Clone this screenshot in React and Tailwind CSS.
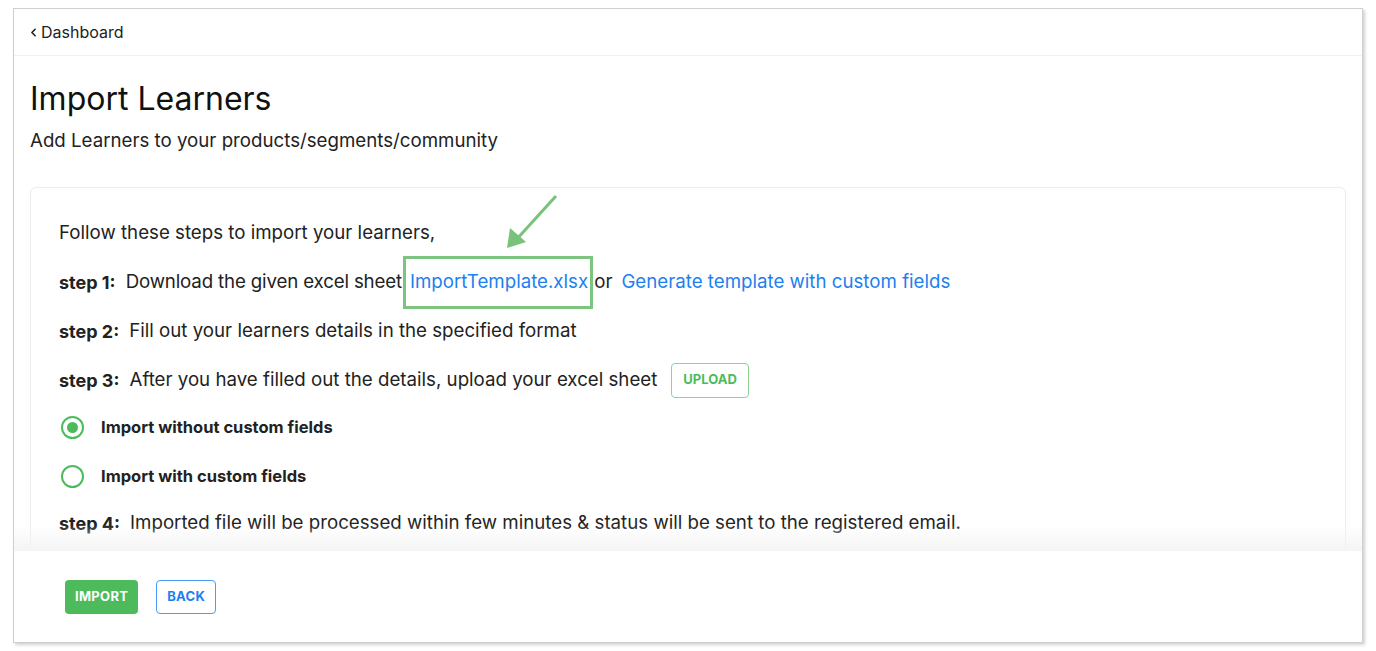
import { ChevronLeft } from "lucide-react";

const FONT = { fontFamily: "Inter, 'Noto Sans', sans-serif" };

function Step({ n, children, className = "h-[49px]" }) {
  return (
    <div className={`flex items-center text-[18.7px] text-[#222] ${className}`}>
      <span className="font-bold text-[18px] mr-[10px]">step {n}:</span>
      {children}
    </div>
  );
}

function Radio({ checked, label, className }) {
  return (
    <label className={`flex items-center ${className}`}>
      <span className="w-[23px] h-[23px] rounded-full border-2 border-[#4dbb5c] grid place-items-center ml-[2px] mr-[17px]">
        {checked && <span className="w-[11px] h-[11px] rounded-full bg-[#4dbb5c]" />}
      </span>
      <span className="text-[16.5px] font-bold text-[#222]">{label}</span>
    </label>
  );
}

export default function App() {
  return (
    <div className="min-h-screen bg-white pt-[8px] pl-[13px]" style={FONT}>
      <div className="w-[1350px] h-[635px] border border-[#cfcfcf] shadow-[2px_2px_3px_rgba(0,0,0,0.18)] flex flex-col bg-white">
        {/* top bar */}
        <div className="h-[47px] shrink-0 flex items-center pl-[13px] border-b border-[#eef0f6]">
          <ChevronLeft size={13} strokeWidth={3} className="text-[#222]" />
          <span className="ml-[1px] text-[16px] text-[#222]">Dashboard</span>
        </div>

        {/* scroll body */}
        <div className="relative h-[495px] shrink-0 overflow-hidden px-[16px]">
          <h1 className="pt-[23px] text-[32px] leading-[40px] text-[#111]">Import Learners</h1>
          <p className="mt-[8px] text-[18.7px] leading-[28px] text-[#222]">Add Learners to your products/segments/community</p>

          <div className="mt-[32px] border border-[#ececec] rounded-md pl-[28px] pt-[21px] pb-[30px]">
            <div className="h-[49px] flex items-center text-[18.7px] text-[#222]">Follow these steps to import your learners,</div>

            <Step n="1">
              <span className="tracking-[-0.15px]">Download the given excel sheet</span>
              <span className="relative ml-[8px] text-[#1d7ff0]">
                ImportTemplate.xlsx
                <span className="absolute -left-[7px] -right-[5px] -top-[12px] -bottom-[12px] border-[3px] border-[#7cc47f]" />
                <svg className="absolute left-[94px] -top-[76px]" width="56" height="60" viewBox="0 0 56 60">
                  <line x1="52" y1="4" x2="12" y2="48" stroke="#79c27c" strokeWidth="3" />
                  <polygon points="3,56 6,36 22,50" fill="#79c27c" />
                </svg>
              </span>
              <span className="ml-[6px]">or</span>
              <span className="ml-[9px] text-[#1d7ff0]">Generate template with custom fields</span>
            </Step>

            <Step n="2">
              <span>Fill out your learners details in the specified format</span>
            </Step>

            <Step n="3" className="h-[48px]">
              <span>After you have filled out the details, upload your excel sheet</span>
              <button className="ml-[14px] h-[35px] px-[11px] rounded border border-[#8fd495] text-[13px] font-bold text-[#4dbb5c]">
                UPLOAD
              </button>
            </Step>

            <Radio checked label="Import without custom fields" className="h-[46px]" />
            <Radio label="Import with custom fields" className="h-[52px]" />

            <Step n="4" className="h-[42px]">
              <span>Imported file will be processed within few minutes &amp; status will be sent to the registered email.</span>
            </Step>
          </div>

          <div className="absolute left-0 right-0 bottom-0 h-[26px] bg-gradient-to-b from-transparent to-[#f4f4f4]" />
        </div>

        {/* footer */}
        <div className="flex-1 flex items-start gap-[18px] pl-[51px] pt-[29px]">
          <button className="h-[34px] px-[10px] rounded bg-[#4dbb5c] text-white text-[13px] font-bold tracking-[0.3px]">IMPORT</button>
          <button className="h-[34px] px-[10px] rounded border border-[#4a9df5] text-[#1d7ff0] text-[13px] font-bold tracking-[0.3px]">BACK</button>
        </div>
      </div>
    </div>
  );
}
